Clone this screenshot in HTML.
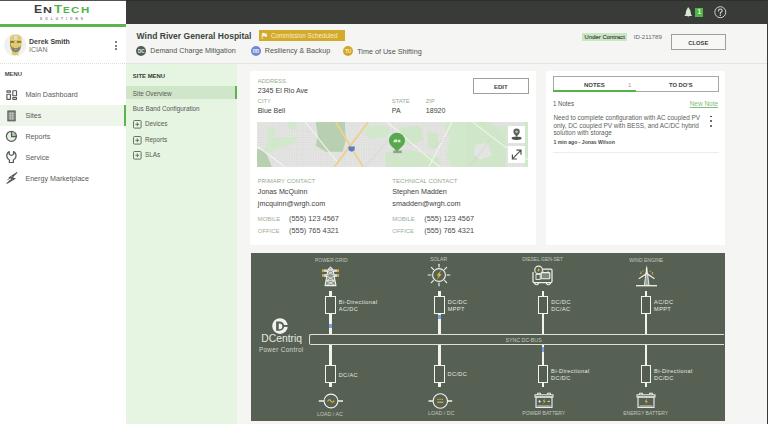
<!DOCTYPE html>
<html><head><meta charset="utf-8"><style>
html,body{margin:0;padding:0;width:768px;height:424px;overflow:hidden;background:#f5f5f3}
body{position:relative;font-family:"Liberation Sans", sans-serif}
.t{position:absolute;white-space:nowrap;line-height:12px;font-family:"Liberation Sans", sans-serif}
svg{overflow:visible}
</style></head><body>
<div style="position:absolute;left:0px;top:0px;width:768px;height:424px;background:#f5f5f3"></div>
<div style="position:absolute;left:0px;top:0px;width:126px;height:424px;background:#fff"></div>
<div style="position:absolute;left:126px;top:0px;width:642px;height:23.5px;background:#383b37"></div>
<div style="position:absolute;left:0px;top:0px;width:126px;height:1px;background:#50564f"></div>
<div style="position:absolute;left:126px;top:0px;width:642px;height:1px;background:#2c2e2c"></div>
<div style="position:absolute;left:0px;top:24px;width:126px;height:2.5px;background:#5bb54f"></div>
<div style="position:absolute;left:126px;top:23.5px;width:641px;height:40.8px;background:#f5f5f3;border-bottom:1px solid #e4e4e2;box-sizing:border-box"></div>
<div style="position:absolute;left:126px;top:63.5px;width:111px;height:361px;background:#e6f4e2"></div>
<div style="position:absolute;left:767px;top:0px;width:1px;height:424px;background:#3a3a3a"></div>
<div class="t" style="left:34.3px;top:2.85px;font-size:11.6px;color:#3d403c;font-weight:700;transform:scaleX(1.05);transform-origin:0 0">E</div>
<div class="t" style="left:43.3px;top:3.85px;font-size:9.2px;color:#3d403c;font-weight:700;transform:scaleX(1.35);transform-origin:0 0">N</div>
<div class="t" style="left:54.4px;top:2.85px;font-size:11.6px;color:#52b347;font-weight:700;transform:scaleX(1.15);transform-origin:0 0">T</div>
<div class="t" style="left:62.9px;top:3.85px;font-size:9.2px;color:#52b347;font-weight:700;transform:scaleX(1.1);transform-origin:0 0">E</div>
<div class="t" style="left:70.8px;top:3.85px;font-size:9.2px;color:#52b347;font-weight:700;transform:scaleX(1.25);transform-origin:0 0">C</div>
<div class="t" style="left:80.8px;top:3.85px;font-size:9.2px;color:#52b347;font-weight:700;transform:scaleX(1.25);transform-origin:0 0">H</div>
<div class="t" style="left:40px;top:12.9px;line-height:12px;font-size:3.1px;letter-spacing:3.1px;color:#777;font-weight:700">SOLUTIONS</div>
<svg style="position:absolute;left:2px;top:32px;" width="26" height="26" viewBox="0 0 26 26">
<defs><pattern id="av" width="1.6" height="1.6" patternUnits="userSpaceOnUse"><rect width="1.6" height="1.6" fill="#e2c14f"/><rect x="0.8" y="0.8" width="0.8" height="0.8" fill="#f1e3b0"/></pattern></defs>
<circle cx="13.2" cy="13.2" r="11" fill="#f0f0ee"/>
<path d="M8.2 5.5 Q8.5 2.8 13.5 2.6 Q19.2 2.8 19.6 6 L19.5 12.5 Q19.2 17 17 19.5 L15.8 22.8 L10.5 22.5 L10 19.5 Q8 17 7.9 12.5 Z" fill="url(#av)"/>
<path d="M8 6 Q8.2 10 8.6 12 L9.6 16 L8.4 14 Q7.8 10 8 6 Z" fill="#66707a"/>
<path d="M8.2 9.6 Q10.5 8.2 12.6 9.6 L12.2 10.8 Q10 10.2 8.3 11 Z M14.6 9.6 Q17 8.2 19.4 9.6 L19.3 10.8 Q17.4 10.2 15.2 10.8 Z" fill="#5b656c"/>
<path d="M9 13.6 Q10.2 16.2 11.2 15.2 Q13.5 17.4 16.2 15.2 Q17.6 16.2 18.8 13.6 Q18.6 18 16.3 19.6 Q13.6 21.2 11 19.6 Q9 18 9 13.6 Z" fill="#7c8378"/>
<path d="M11.6 16.8 Q13.6 18.4 15.6 16.8 Q13.6 19.6 11.6 16.8 Z" fill="#e2c14f"/>
<path d="M11.8 3.6 L15.4 3.6 L15 7.8 L12.2 7.8 Z" fill="#d9e0e2"/>
<path d="M10.4 20.2 L11 23 M14.4 21 L16.2 23.4 M12.4 21.4 L12.8 23.4" stroke="#e2c14f" stroke-width="1"/>
</svg>
<div class="t" style="left:29px;top:35.70px;font-size:7.0px;color:#3e413e;font-weight:700;">Derek Smith</div>
<div class="t" style="left:29px;top:44.00px;font-size:6.95px;color:#707370;">ICIAN</div>
<div style="position:absolute;left:114.5px;top:40.6px;width:2px;height:2px;background:#555;border-radius:50%"></div>
<div style="position:absolute;left:114.5px;top:44.5px;width:2px;height:2px;background:#555;border-radius:50%"></div>
<div style="position:absolute;left:114.5px;top:48.4px;width:2px;height:2px;background:#555;border-radius:50%"></div>
<div style="position:absolute;left:0px;top:63px;width:126px;height:1px;background-image:linear-gradient(90deg,#ddd 50%,transparent 50%);background-size:2px 1px"></div>
<div class="t" style="left:4.7px;top:68.30px;font-size:5.9px;color:#474a47;font-weight:700;">MENU</div>
<div style="position:absolute;left:0px;top:105.3px;width:126px;height:20.3px;background:#eef6ec"></div>
<div style="position:absolute;left:123.8px;top:105.3px;width:2.2px;height:20.3px;background:#5bb54f"></div>
<div class="t" style="left:25.4px;top:89.30px;font-size:7.15px;color:#585b58;">Main Dashboard</div>
<div class="t" style="left:25.4px;top:109.90px;font-size:7.15px;color:#585b58;">Sites</div>
<div class="t" style="left:25.4px;top:130.80px;font-size:7.15px;color:#585b58;">Reports</div>
<div class="t" style="left:25.4px;top:151.50px;font-size:7.15px;color:#585b58;">Service</div>
<div class="t" style="left:25.4px;top:172.60px;font-size:7.15px;color:#585b58;">Energy Marketplace</div>
<svg style="position:absolute;left:0px;top:0px;" width="20" height="110" viewBox="0 0 20 110">
<rect x="6.9" y="90.7" width="3.5" height="1.6" rx="0.3" fill="none" stroke="#555a55" stroke-width="1.15"/>
<rect x="6.9" y="94.2" width="3.5" height="5.2" rx="0.4" fill="none" stroke="#555a55" stroke-width="1.15"/>
<rect x="12.8" y="90.7" width="3.7" height="5.1" rx="0.4" fill="none" stroke="#555a55" stroke-width="1.15"/>
<rect x="12.8" y="97.5" width="3.7" height="1.9" rx="0.3" fill="none" stroke="#555a55" stroke-width="1.15"/>
</svg>
<svg style="position:absolute;left:7px;top:110px;" width="9" height="11.5" viewBox="0 0 9 11.5">
<rect x="0.9" y="1" width="7.2" height="9.8" fill="#858b85" stroke="#555a55" stroke-width="1.1"/>
<path d="M3.3 2 V10.2 M5.7 2 V10.2 M1.5 3.6 H7.5 M1.5 5.9 H7.5 M1.5 8.2 H7.5" stroke="#c9d0c9" stroke-width="0.7"/>
</svg>
<svg style="position:absolute;left:0px;top:120px;" width="24" height="24" viewBox="0 0 24 24">
<circle cx="11.4" cy="16.3" r="5" fill="#e3f3df" stroke="#555a55" stroke-width="1.25"/>
<path d="M11.6 11.3 V16.5 H16.4" fill="none" stroke="#555a55" stroke-width="1.3"/>
<path d="M12.6 11.8 A4.2 4.2 0 0 1 15.9 15.3 L12.6 15.3 Z" fill="#9ba09b"/>
<path d="M13.8 12.4 V15" stroke="#e9ece9" stroke-width="0.6"/>
</svg>
<svg style="position:absolute;left:0px;top:140px;" width="24" height="26" viewBox="0 0 24 26">
<path d="M9.3 11.6 A4.7 4.7 0 0 0 9.4 20 V22.5 H13.4 V20 A4.7 4.7 0 0 0 13.5 11.6 V14.4 Q11.4 16.2 9.3 14.4 Z" fill="#f4faf3" stroke="#555a55" stroke-width="1.2" stroke-linejoin="round"/>
</svg>
<svg style="position:absolute;left:6px;top:171.5px;" width="12" height="12" viewBox="0 0 12 12">
<path d="M10.8 0.6 L3.2 5.6 L7.2 5.8 L1 11.4 L9 6.6 L5.2 6.4 Z" fill="none" stroke="#555a55" stroke-width="1.1" stroke-linejoin="round"/>
<path d="M1.5 7.8 L4 6.2 M2.2 10 L3.6 9" stroke="#555a55" stroke-width="0.9"/>
</svg>
<svg style="position:absolute;left:683.5px;top:6.8px;" width="9" height="11" viewBox="0 0 9 11">
<path d="M4.3 0.5 C5 0.5 5.3 1.2 5.4 2 C6.4 2.8 6.6 4.2 6.8 6.2 C7 7.6 7.6 8.4 8.4 9.1 L0.2 9.1 C1 8.4 1.6 7.6 1.8 6.2 C2 4.2 2.2 2.8 3.2 2 C3.3 1.2 3.6 0.5 4.3 0.5 Z" fill="#d6ead3"/>
<path d="M3.3 9.4 Q4.3 11 5.3 9.4 Z" fill="#d6ead3"/>
</svg>
<div style="position:absolute;left:695px;top:8px;width:8.3px;height:8.6px;background:#4fb545"></div>
<div class="t" style="left:697.6px;top:6.30px;font-size:6.5px;color:#e8f5e6;font-weight:700;">1</div>
<svg style="position:absolute;left:713.5px;top:5.8px;" width="13" height="13" viewBox="0 0 13 13">
<circle cx="6.3" cy="6.2" r="5.5" fill="none" stroke="#cdd1cd" stroke-width="1"/>
<path d="M4.5 4.9 Q4.5 3 6.3 3 Q8.1 3 8.1 4.7 Q8.1 5.8 6.9 6.3 Q6.3 6.6 6.3 7.6" fill="none" stroke="#d8dcd8" stroke-width="1.1" stroke-linecap="round"/>
<circle cx="6.3" cy="9.2" r="0.7" fill="#d8dcd8"/>
</svg>
<div class="t" style="left:136.6px;top:29.90px;font-size:8.56px;color:#3c463c;font-weight:700;">Wind River General Hospital</div>
<div style="position:absolute;left:258.75px;top:30.0px;width:86px;height:10.7px;background:#d4aa2a"></div>
<svg style="position:absolute;left:260.6px;top:32px;" width="7" height="7.5" viewBox="0 0 7 7.5"><path d="M1.2 1 V7" stroke="#fbf6e6" stroke-width="0.8"/><path d="M1.4 1.2 Q3 0.4 4.2 1.4 Q5.2 2 6.4 1.2 L5.6 2.8 L6.4 4.4 Q5.2 5.2 4.2 4.6 Q3 3.8 1.4 4.6 Z" fill="#fbf6e6"/></svg>
<div class="t" style="left:271px;top:29.60px;font-size:6.34px;color:#f8eccb;">Commission Scheduled</div>
<div style="position:absolute;left:136.0px;top:45.599999999999994px;width:10.4px;height:10.4px;background:#555e55;border-radius:50%"></div>
<div class="t" style="left:138.1px;top:45.50px;font-size:4.6px;color:#e8ece8;font-weight:700;letter-spacing:-0.15px">DC</div>
<div class="t" style="left:150.2px;top:45.30px;font-size:7.2px;color:#505650;">Demand Charge Mitigation</div>
<div style="position:absolute;left:250.60000000000002px;top:45.599999999999994px;width:10.4px;height:10.4px;background:#7088d4;border-radius:50%"></div>
<div class="t" style="left:252.70000000000002px;top:45.50px;font-size:4.6px;color:#e8ecf8;font-weight:700;letter-spacing:-0.15px">RB</div>
<div class="t" style="left:264.7px;top:45.30px;font-size:7.2px;color:#505650;">Resiliency &amp; Backup</div>
<div style="position:absolute;left:343.1px;top:45.8px;width:10.4px;height:10.4px;background:#d4a72c;border-radius:50%"></div>
<div class="t" style="left:345.2px;top:45.70px;font-size:4.6px;color:#fbf0c8;font-weight:700;letter-spacing:-0.15px">TU</div>
<div class="t" style="left:357.2px;top:45.50px;font-size:7.2px;color:#505650;">Time of Use Shifting</div>
<div style="position:absolute;left:582.2px;top:33.2px;width:44.7px;height:7.8px;background:#cbe6c4"></div>
<div class="t" style="left:584.6px;top:31.10px;font-size:5.95px;color:#3f4a3e;font-weight:400;-webkit-text-stroke:0.15px #3f4a3e">Under Contract</div>
<div class="t" style="left:633.7px;top:30.65px;font-size:6.14px;color:#666966;">ID-211789</div>
<div style="position:absolute;left:670.7px;top:34.3px;width:55px;height:15.7px;border:1px solid #9c9f9c;box-sizing:border-box;background:#f7f7f5"></div>
<div class="t" style="left:688.3px;top:36.50px;font-size:5.8px;color:#3f423e;font-weight:700;">CLOSE</div>
<div class="t" style="left:132.8px;top:69.50px;font-size:5.95px;color:#3a3d3a;font-weight:700;">SITE MENU</div>
<div style="position:absolute;left:126px;top:86px;width:111px;height:13.4px;background:#cfe6c8"></div>
<div style="position:absolute;left:234.6px;top:86px;width:2.4px;height:13.4px;background:#5bb54f"></div>
<div class="t" style="left:132.8px;top:88.00px;font-size:6.3px;color:#555855;">Site Overview</div>
<div class="t" style="left:132.8px;top:102.90px;font-size:6.33px;color:#555855;">Bus Band Configuration</div>
<svg style="position:absolute;left:132.8px;top:120.0px;" width="9" height="9" viewBox="0 0 9 9"><rect x="0.5" y="0.5" width="7.6" height="7.6" rx="0.9" fill="none" stroke="#5f625f" stroke-width="0.9"/><path d="M4.3 2.4 V6.2 M2.4 4.3 H6.2" stroke="#5f625f" stroke-width="0.9"/></svg>
<div class="t" style="left:145px;top:118.10px;font-size:6.3px;color:#555855;">Devices</div>
<svg style="position:absolute;left:132.8px;top:135.5px;" width="9" height="9" viewBox="0 0 9 9"><rect x="0.5" y="0.5" width="7.6" height="7.6" rx="0.9" fill="none" stroke="#5f625f" stroke-width="0.9"/><path d="M4.3 2.4 V6.2 M2.4 4.3 H6.2" stroke="#5f625f" stroke-width="0.9"/></svg>
<div class="t" style="left:145px;top:133.60px;font-size:6.3px;color:#555855;">Reports</div>
<svg style="position:absolute;left:132.8px;top:151.1px;" width="9" height="9" viewBox="0 0 9 9"><rect x="0.5" y="0.5" width="7.6" height="7.6" rx="0.9" fill="none" stroke="#5f625f" stroke-width="0.9"/><path d="M4.3 2.4 V6.2 M2.4 4.3 H6.2" stroke="#5f625f" stroke-width="0.9"/></svg>
<div class="t" style="left:145px;top:149.20px;font-size:6.3px;color:#555855;">SLAs</div>
<div style="position:absolute;left:250.3px;top:70.6px;width:285.4px;height:174.4px;background:#fff"></div>
<div class="t" style="left:257.7px;top:75.10px;font-size:5.82px;color:#92ae8d;">ADDRESS</div>
<div class="t" style="left:257.7px;top:84.50px;font-size:7.1px;color:#3e433e;">2345 El Rio Ave</div>
<div class="t" style="left:257.7px;top:95.30px;font-size:5.82px;color:#92ae8d;">CITY</div>
<div class="t" style="left:257.7px;top:105.40px;font-size:6.97px;color:#3e433e;">Blue Bell</div>
<div class="t" style="left:391.8px;top:95.30px;font-size:5.82px;color:#92ae8d;">STATE</div>
<div class="t" style="left:391.8px;top:105.40px;font-size:6.97px;color:#3e433e;">PA</div>
<div class="t" style="left:425.8px;top:95.30px;font-size:5.82px;color:#92ae8d;">ZIP</div>
<div class="t" style="left:425.8px;top:105.40px;font-size:7.08px;color:#3e433e;">18920</div>
<div style="position:absolute;left:473.4px;top:78.3px;width:55.3px;height:15.3px;border:1px solid #9c9f9c;box-sizing:border-box;background:#fff"></div>
<div class="t" style="left:493.9px;top:81.00px;font-size:6.1px;color:#3e433e;font-weight:700;">EDIT</div>
<svg style="position:absolute;left:257.2px;top:122.2px;" width="271.1" height="44.9" viewBox="0 0 271.1 44.9">
<defs>
<pattern id="dd" width="1.8" height="1.8" patternUnits="userSpaceOnUse"><rect width="1.8" height="1.8" fill="#c9e1c1"/><rect x="0.5" y="0.5" width="0.8" height="0.8" fill="#758572"/></pattern>
<pattern id="wd" width="1.8" height="1.8" patternUnits="userSpaceOnUse"><rect width="1.8" height="1.8" fill="#c8e2bf"/><rect x="0.5" y="0.5" width="0.8" height="0.8" fill="#f2f7f0"/></pattern>
<pattern id="gt" width="2.4" height="2.4" patternUnits="userSpaceOnUse"><rect width="2.4" height="2.4" fill="#e4e4e2"/><rect x="1" y="1" width="0.7" height="0.7" fill="#cacac8"/></pattern>
<clipPath id="mc"><rect width="271.1" height="44.9"/></clipPath>
</defs>
<g clip-path="url(#mc)">
<rect width="271.1" height="44.9" fill="url(#gt)"/>
<path d="M10.8 4.8 L17.8 4.8 L17.8 15.8 L40.8 14.8 L38.8 20.8 L27.8 24.8 L17.8 26.8 L14.8 30.8 L4.8 30.8 L8.8 23.8 L10.8 17.8 Z" fill="#d2e8ca"/><path d="M30.8 0.0 L40.8 0.0 L38.8 7.8 L31.8 6.8 Z" fill="#d2e8ca"/><path d="M107.8 4.8 L122.8 2.8 L133.8 5.8 L130.8 13.8 L114.8 17.3 L107.8 13.8 Z" fill="#d2e8ca"/><path d="M186.8 2.8 L194.8 0.0 L208.8 0.0 L208.8 44.9 L194.8 44.9 L188.8 32.8 L192.8 17.8 Z" fill="#d2e8ca"/><path d="M234.8 5.8 L249.8 2.8 L249.8 27.8 L238.8 23.8 Z" fill="#d2e8ca"/><path d="M266.8 0.0 L271.1 0.0 L271.1 44.9 L266.8 44.9 Z" fill="#d2e8ca"/><path d="M58.8 0.0 L87.8 0.0 L88.8 17.8 L85.8 29.8 L68.8 29.8 L58.8 23.8 L60.8 12.8 Z" fill="url(#dd)"/><path d="M0.0 26.8 L8.8 29.8 L14.8 44.9 L0.0 44.9 Z" fill="url(#dd)"/><path d="M128.8 30.3 L152.8 27.8 L172.8 32.8 L174.8 44.9 L128.8 44.9 Z" fill="url(#wd)"/><path d="M208.8 0.0 L232.8 0.0 L247.8 12.8 L248.8 44.9 L208.8 44.9 Z" fill="url(#wd)"/><path d="M170.5 9.8 L181.5 11.8 L180.8 26.5 L170.8 24.8 Z" fill="url(#wd)"/><path d="M167.8 33.8 L182.8 35.8 L182.8 44.9 L167.8 44.9 Z" fill="url(#wd)"/><path d="M142.8 5.8 L162.8 3.8 L166.8 17.8 L152.8 23.8 L142.8 17.8 Z" fill="url(#wd)"/><path d="M218.8 22.8 L230.8 20.8 L234.8 33.8 L222.8 37.8 L216.8 31.8 Z" fill="#e4e4e2"/>
<path d="M0.0 24.3 L28.3 44.9 M48.3 0.0 L81.4 41.4 M130.1 0.0 L172.8 36.8 M172.8 36.8 L182.8 44.9 M171.8 44.9 L195.1 0.0 M215.7 0.0 L248.5 25.1 M248.5 25.1 L271.1 37.8" stroke="#f3f3f1" stroke-width="1.1" fill="none"/>
<path d="M107.8 44.9 L131.4 17.8 M174.6 27.8 L187.8 15.8 M212.8 44.9 L232.8 17.8" stroke="#cfcfcd" stroke-width="0.6" fill="none"/>
<path d="M78.7 0.0 L106.0 44.9 M111.2 0.0 L77.4 44.9" stroke="#ecd18f" stroke-width="1.9" fill="none"/>
<path d="M91.2 24.6 L98.0 24.6 L97.4 28.4 L94.6 29.7 L91.8 28.4 Z" fill="#5d79c9"/>
</g>
</svg>
<svg style="position:absolute;left:388px;top:131.5px;" width="18" height="24" viewBox="0 0 18 24">
<rect x="5.2" y="18.5" width="8.6" height="2.6" fill="#8a8d8a" opacity="0.8"/>
<path d="M9 20 C7.4 16.5 1 14 1 8.7 A8 8 0 0 1 17 8.7 C17 14 10.6 16.5 9 20 Z" fill="#57aa4b"/>
<path d="M5.2 10.2 L6.2 7.6 L9 7.6 L9 10.2 Z M9.6 7.8 H12.4 V10.2 H9.6 Z" fill="#d8ecd5"/>
</svg>
<div style="position:absolute;left:507.7px;top:126px;width:17.3px;height:16.9px;background:#fff"></div>
<div style="position:absolute;left:507.7px;top:146.3px;width:17.3px;height:17.1px;background:#fff"></div>
<svg style="position:absolute;left:507.7px;top:126px;" width="17.3" height="16.9" viewBox="0 0 17.3 16.9">
<path d="M8.6 10.8 C7.4 9.2 5.4 8 5.4 5.8 A3.2 3.2 0 0 1 11.8 5.8 C11.8 8 9.8 9.2 8.6 10.8 Z" fill="#5a605a"/>
<circle cx="8.6" cy="5.8" r="1.3" fill="#b8beb8"/>
<ellipse cx="8.6" cy="12.3" rx="5" ry="1.7" fill="#4d524d"/>
</svg>
<svg style="position:absolute;left:507.7px;top:146.3px;" width="17.3" height="17.1" viewBox="0 0 17.3 17.1">
<path d="M4.6 12.6 L12.8 4.4 M8.4 4.2 H13 V8.8 M4.4 8.4 V13 H9" stroke="#4d524d" stroke-width="1.2" fill="none"/>
</svg>
<div class="t" style="left:257.8px;top:175.40px;font-size:6.03px;color:#92ae8d;">PRIMARY CONTACT</div>
<div class="t" style="left:257.8px;top:185.50px;font-size:7.17px;color:#3e433e;">Jonas McQuinn</div>
<div class="t" style="left:257.8px;top:197.70px;font-size:7.21px;color:#3e433e;">jmcquinn@wrgh.com</div>
<div class="t" style="left:257.8px;top:213.30px;font-size:5.95px;color:#9ab096;">MOBILE</div>
<div class="t" style="left:289px;top:213.10px;font-size:7.36px;color:#4a4d4a;">(555) 123 4567</div>
<div class="t" style="left:257.8px;top:225.00px;font-size:5.95px;color:#9ab096;">OFFICE</div>
<div class="t" style="left:289px;top:224.80px;font-size:7.36px;color:#4a4d4a;">(555) 765 4321</div>
<div class="t" style="left:392.3px;top:175.40px;font-size:6.11px;color:#92ae8d;">TECHNICAL CONTACT</div>
<div class="t" style="left:392.3px;top:185.50px;font-size:7.17px;color:#3e433e;">Stephen Madden</div>
<div class="t" style="left:392.3px;top:197.70px;font-size:7.21px;color:#3e433e;">smadden@wrgh.com</div>
<div class="t" style="left:392.3px;top:213.30px;font-size:5.95px;color:#9ab096;">MOBILE</div>
<div class="t" style="left:424.2px;top:213.10px;font-size:7.36px;color:#4a4d4a;">(555) 123 4567</div>
<div class="t" style="left:392.3px;top:225.00px;font-size:5.95px;color:#9ab096;">OFFICE</div>
<div class="t" style="left:424.2px;top:224.80px;font-size:7.36px;color:#4a4d4a;">(555) 765 4321</div>
<div style="position:absolute;left:545.5px;top:70.6px;width:179.6px;height:174.4px;background:#fff"></div>
<div style="position:absolute;left:552.9px;top:76.3px;width:165.7px;height:15.9px;border:1px solid #a5a8a5;box-sizing:border-box"></div>
<div style="position:absolute;left:553.4px;top:90px;width:82.6px;height:2px;background:#52b347"></div>
<div class="t" style="left:584px;top:78.75px;font-size:6.04px;color:#3e433e;font-weight:700;">NOTES</div>
<div class="t" style="left:628px;top:78.75px;font-size:6.0px;color:#999;">1</div>
<div class="t" style="left:669px;top:78.75px;font-size:5.82px;color:#3e433e;font-weight:700;">TO DO'S</div>
<div class="t" style="left:552.9px;top:97.50px;font-size:7.0px;color:#525552;transform:scaleX(0.87);transform-origin:0 0">1 Notes</div>
<div class="t" style="left:689.7px;top:97.60px;font-size:6.47px;color:#85bd7e;text-decoration:underline">New Note</div>
<div class="t" style="left:553.4px;top:112.20px;font-size:6.42px;color:#5c5f5c;">Need to complete configuration with AC coupled PV</div>
<div class="t" style="left:553.4px;top:119.80px;font-size:6.42px;color:#5c5f5c;">only, DC coupled PV with BESS, and AC/DC hybrid</div>
<div class="t" style="left:553.4px;top:127.10px;font-size:6.42px;color:#5c5f5c;">solution with storage</div>
<div class="t" style="left:553.4px;top:136.20px;font-size:5.13px;color:#4a4d4a;font-weight:700;">1 min ago - Jonas Wilson</div>
<div style="position:absolute;left:710.3px;top:115.69999999999999px;width:1.8px;height:1.8px;background:#444;border-radius:50%"></div>
<div style="position:absolute;left:710.3px;top:120.3px;width:1.8px;height:1.8px;background:#444;border-radius:50%"></div>
<div style="position:absolute;left:710.3px;top:124.89999999999999px;width:1.8px;height:1.8px;background:#444;border-radius:50%"></div>
<div style="position:absolute;left:553px;top:152px;width:165.5px;height:1px;background:#ececea"></div>
<div style="position:absolute;left:250.5px;top:252.7px;width:474.0px;height:168.7px;background:#566153"></div>
<div style="position:absolute;left:308.8px;top:333.7px;width:415.7px;height:11.1px;border:1.3px solid #dfe0da;border-right:none;border-radius:2.2px 0 0 2.2px;box-sizing:border-box;background:#535e50"></div>
<div class="t" style="left:505.4px;top:333.80px;font-size:5.28px;color:#c4c9c1;">SYNC DC-BUS</div>
<div style="position:absolute;left:329.45000000000005px;top:290.5px;width:2.3px;height:43.30000000000001px;background:#f2f2ee"></div>
<div style="position:absolute;left:329.45000000000005px;top:345px;width:2.3px;height:42.30000000000001px;background:#f2f2ee"></div>
<div style="position:absolute;left:325.40000000000003px;top:296.2px;width:10.4px;height:17.6px;border:1.2px solid #f2f2ee;box-sizing:border-box;background:#535e50"></div>
<div style="position:absolute;left:325.40000000000003px;top:365.2px;width:10.4px;height:17.5px;border:1.2px solid #f2f2ee;box-sizing:border-box;background:#535e50"></div>
<div style="position:absolute;left:438.45000000000005px;top:290.5px;width:2.3px;height:43.30000000000001px;background:#f2f2ee"></div>
<div style="position:absolute;left:438.45000000000005px;top:345px;width:2.3px;height:42.30000000000001px;background:#f2f2ee"></div>
<div style="position:absolute;left:434.40000000000003px;top:296.2px;width:10.4px;height:17.6px;border:1.2px solid #f2f2ee;box-sizing:border-box;background:#535e50"></div>
<div style="position:absolute;left:434.40000000000003px;top:365.2px;width:10.4px;height:17.5px;border:1.2px solid #f2f2ee;box-sizing:border-box;background:#535e50"></div>
<div style="position:absolute;left:541.5500000000001px;top:290.5px;width:2.3px;height:43.30000000000001px;background:#f2f2ee"></div>
<div style="position:absolute;left:541.5500000000001px;top:345px;width:2.3px;height:42.30000000000001px;background:#f2f2ee"></div>
<div style="position:absolute;left:537.5px;top:296.2px;width:10.4px;height:17.6px;border:1.2px solid #f2f2ee;box-sizing:border-box;background:#535e50"></div>
<div style="position:absolute;left:537.5px;top:365.2px;width:10.4px;height:17.5px;border:1.2px solid #f2f2ee;box-sizing:border-box;background:#535e50"></div>
<div style="position:absolute;left:644.65px;top:290.5px;width:2.3px;height:43.30000000000001px;background:#f2f2ee"></div>
<div style="position:absolute;left:644.65px;top:345px;width:2.3px;height:42.30000000000001px;background:#f2f2ee"></div>
<div style="position:absolute;left:640.5999999999999px;top:296.2px;width:10.4px;height:17.6px;border:1.2px solid #f2f2ee;box-sizing:border-box;background:#535e50"></div>
<div style="position:absolute;left:640.5999999999999px;top:365.2px;width:10.4px;height:17.5px;border:1.2px solid #f2f2ee;box-sizing:border-box;background:#535e50"></div>
<div style="position:absolute;left:329.45000000000005px;top:323.6px;width:2.3px;height:4.6px;background:#7d9ee6"></div>
<div style="position:absolute;left:438.45000000000005px;top:315.0px;width:2.3px;height:3.9px;background:#7d9ee6"></div>
<div style="position:absolute;left:541.5500000000001px;top:346.6px;width:2.3px;height:5.3px;background:#7d9ee6"></div>
<div class="t" style="left:315.0px;top:255.20px;font-size:4.96px;color:#c2c7bf;">POWER GRID</div>
<div class="t" style="left:430.2px;top:254.40px;font-size:4.96px;color:#c2c7bf;">SOLAR</div>
<div class="t" style="left:522.3px;top:253.80px;font-size:4.96px;color:#c2c7bf;">DIESEL GEN-SET</div>
<div class="t" style="left:629.2px;top:254.10px;font-size:5.02px;color:#c2c7bf;">WIND ENGINE</div>
<div class="t" style="left:338.8px;top:295.50px;font-size:5.6px;color:#e4e7e0;letter-spacing:0.38px">Bi-Directional</div>
<div class="t" style="left:338.8px;top:303.00px;font-size:5.6px;color:#e4e7e0;letter-spacing:0.38px">AC/DC</div>
<div class="t" style="left:447.8px;top:295.50px;font-size:5.6px;color:#e4e7e0;letter-spacing:0.38px">DC/DC</div>
<div class="t" style="left:447.8px;top:302.80px;font-size:5.6px;color:#e4e7e0;letter-spacing:0.38px">MPPT</div>
<div class="t" style="left:551.2px;top:295.50px;font-size:5.6px;color:#e4e7e0;letter-spacing:0.38px">DC/DC</div>
<div class="t" style="left:551.2px;top:302.80px;font-size:5.6px;color:#e4e7e0;letter-spacing:0.38px">DC/AC</div>
<div class="t" style="left:654.1px;top:295.50px;font-size:5.6px;color:#e4e7e0;letter-spacing:0.38px">AC/DC</div>
<div class="t" style="left:654.1px;top:302.80px;font-size:5.6px;color:#e4e7e0;letter-spacing:0.38px">MPPT</div>
<div class="t" style="left:338.7px;top:368.50px;font-size:5.6px;color:#e4e7e0;letter-spacing:0.38px">DC/AC</div>
<div class="t" style="left:447.6px;top:368.20px;font-size:5.6px;color:#e4e7e0;letter-spacing:0.38px">DC/DC</div>
<div class="t" style="left:551.1px;top:364.60px;font-size:5.6px;color:#e4e7e0;letter-spacing:0.38px">Bi-Directional</div>
<div class="t" style="left:551.1px;top:372.00px;font-size:5.6px;color:#e4e7e0;letter-spacing:0.38px">DC/DC</div>
<div class="t" style="left:654.1px;top:364.60px;font-size:5.6px;color:#e4e7e0;letter-spacing:0.38px">Bi-Directional</div>
<div class="t" style="left:654.1px;top:372.00px;font-size:5.6px;color:#e4e7e0;letter-spacing:0.38px">DC/DC</div>
<div class="t" style="left:317.0px;top:407.90px;font-size:5.28px;color:#c2c7bf;">LOAD / AC</div>
<div class="t" style="left:428.0px;top:407.30px;font-size:5.28px;color:#c2c7bf;">LOAD / DC</div>
<div class="t" style="left:522.3px;top:407.10px;font-size:5.01px;color:#c2c7bf;">POWER BATTERY</div>
<div class="t" style="left:623.2px;top:407.10px;font-size:5.0px;color:#c2c7bf;">ENERGY BATTERY</div>
<svg style="position:absolute;left:270px;top:316.4px;" width="20" height="20" viewBox="0 0 20 20">
<circle cx="10" cy="10.1" r="7.8" fill="#f2f2ee"/>
<path d="M6.1 5.5 H9.6 A4.6 4.6 0 0 1 9.6 14.7 H6.1 Z" fill="#566153"/>
<path d="M8.7 7.4 H9.4 A2.95 2.95 0 0 1 9.4 13.3 H8.7 Z" fill="#f2f2ee"/>
<rect x="13" y="9.0" width="6" height="1.9" fill="#566153"/>
</svg>
<div class="t" style="left:261.3px;top:333.00px;font-size:10.34px;color:#e4e7e0;">DCentriq</div>
<div class="t" style="left:258.9px;top:343.90px;font-size:6.4px;color:#d0d4cc;letter-spacing:0.32px">Power Control</div>
<svg style="position:absolute;left:320px;top:265px;" width="21" height="22" viewBox="0 0 21 22">
<path d="M10.5 2 L8 5 L4.2 5 L4.2 6.3 L7.7 6.3 L7 9.8 L4.2 9.8 L4.2 11.1 L6.8 11.1 L5 20.6 L16 20.6 L14.2 11.1 L16.8 11.1 L16.8 9.8 L14 9.8 L13.3 6.3 L16.8 6.3 L16.8 5 L13 5 Z" fill="#8e978b" stroke="#f2f2ee" stroke-width="1.05" stroke-linejoin="round"/>
<path d="M8.2 3.6 L12.8 6.3 M12.8 3.6 L8.2 6.3 M7.8 6.3 L13.2 9.8 M13.2 6.3 L7.8 9.8 M7 11.1 L14 15.6 M14 11.1 L6.6 15.6 M6.3 15.6 L14.8 20.6 M14.8 15.6 L6.2 20.6 M6.6 15.6 H14.4" stroke="#f2f2ee" stroke-width="0.75"/>
<path d="M2.4 4.4 L4.4 5.6 L2.4 6.9 Z M18.6 4.4 L16.6 5.6 L18.6 6.9 Z M2.4 9.2 L4.4 10.4 L2.4 11.7 Z M18.6 9.2 L16.6 10.4 L18.6 11.7 Z" fill="#e6bd3a" stroke="#e6bd3a" stroke-width="0.6"/>
</svg>
<svg style="position:absolute;left:427.5px;top:264.3px;" width="22" height="22" viewBox="0 0 22 22">
<circle cx="11" cy="11" r="6.4" fill="none" stroke="#f2f2ee" stroke-width="1.1"/>
<path d="M11.00 3.00 L11.00 0.20" stroke="#f2f2ee" stroke-width="1.15" stroke-linecap="round"/><path d="M16.66 5.34 L18.64 3.36" stroke="#f2f2ee" stroke-width="1.15" stroke-linecap="round"/><path d="M19.00 11.00 L21.80 11.00" stroke="#f2f2ee" stroke-width="1.15" stroke-linecap="round"/><path d="M16.66 16.66 L18.64 18.64" stroke="#f2f2ee" stroke-width="1.15" stroke-linecap="round"/><path d="M11.00 19.00 L11.00 21.80" stroke="#f2f2ee" stroke-width="1.15" stroke-linecap="round"/><path d="M5.34 16.66 L3.36 18.64" stroke="#f2f2ee" stroke-width="1.15" stroke-linecap="round"/><path d="M3.00 11.00 L0.20 11.00" stroke="#f2f2ee" stroke-width="1.15" stroke-linecap="round"/><path d="M5.34 5.34 L3.36 3.36" stroke="#f2f2ee" stroke-width="1.15" stroke-linecap="round"/>
<path d="M13.6 5.8 L8.6 11.4 L10.8 11.6 L8.4 16 L13.6 10.2 L11.4 10 Z" fill="#e6bd3a"/>
</svg>
<svg style="position:absolute;left:531px;top:265px;" width="23" height="21" viewBox="0 0 23 21">
<path d="M4 4.2 H20 Q21 4.2 21 5.2 V16.6 Q21 17.6 20 17.6 H3 Q2 17.6 2 16.6 V7" fill="none" stroke="#f2f2ee" stroke-width="1.2"/>
<rect x="10.2" y="7.6" width="8.6" height="6.2" rx="0.8" fill="#7f887c" stroke="#f2f2ee" stroke-width="1.1"/>
<rect x="5" y="9.4" width="4.2" height="5" fill="none" stroke="#f2f2ee" stroke-width="0.9"/>
<path d="M12 7.6 V5.6 M17 7.6 V5.6" stroke="#f2f2ee" stroke-width="0.7"/>
<circle cx="7.6" cy="4.9" r="3.8" fill="#566153" stroke="#f2f2ee" stroke-width="1.1"/>
<path d="M8.4 2.2 L6.2 5.4 L7.6 5.4 L6.6 7.8 L9.2 4.4 L7.8 4.4 Z" fill="#e6bd3a"/>
<path d="M3.6 17.6 Q3.6 19.8 5.6 19.8 Q7.6 19.8 7.6 17.6 M15.4 17.6 Q15.4 19.8 17.4 19.8 Q19.4 19.8 19.4 17.6" fill="none" stroke="#f2f2ee" stroke-width="1.1"/>
</svg>
<svg style="position:absolute;left:634.5px;top:263.5px;" width="23" height="23" viewBox="0 0 23 23">
<path d="M11.7 1.2 Q12.9 5 12.7 8.6 L10.7 8.6 Q10.5 5 11.7 1.2 Z" fill="#f2f2ee"/>
<path d="M10.9 9.2 L3.6 14.2 Q3.4 15.2 4.4 15.1 L11.6 10.6 Z M12.5 9.2 L19.8 14.2 Q20 15.2 19 15.1 L11.8 10.6 Z" fill="#f2f2ee"/>
<circle cx="11.7" cy="9.4" r="1.4" fill="#f2f2ee"/>
<path d="M10.8 10.4 L9.4 21.3 L14 21.3 L12.6 10.4" fill="#9aa297" stroke="#f2f2ee" stroke-width="0.9"/>
<path d="M1 21.7 H22" stroke="#f2f2ee" stroke-width="1.3"/>
<path d="M5.6 10.2 Q7 8.6 5.4 7.6 M7.6 7.6 L8.4 6.6 M17.8 8 Q16.4 9.6 18 10.6 M15.8 6.8 L15 7.8" stroke="#e6bd3a" stroke-width="1" fill="none"/>
</svg>
<svg style="position:absolute;left:316.5px;top:391.5px;" width="27" height="18" viewBox="0 0 27 18">
<circle cx="14" cy="9" r="6.9" fill="none" stroke="#f2f2ee" stroke-width="1.1"/>
<path d="M1.8 9 H7.1 M20.9 9 H26" stroke="#f2f2ee" stroke-width="1.3"/>
<path d="M10.6 9.4 Q12.2 6.4 13.8 9 Q15.4 11.6 17.2 8.6" fill="none" stroke="#e6bd3a" stroke-width="1.1"/>
</svg>
<svg style="position:absolute;left:426.5px;top:391.5px;" width="27" height="18" viewBox="0 0 27 18">
<circle cx="13.3" cy="9" r="7.2" fill="none" stroke="#f2f2ee" stroke-width="1.1"/>
<path d="M1.5 9 H6.1 M20.5 9 H25.2" stroke="#f2f2ee" stroke-width="1.3"/>
<path d="M10.2 7.3 H16.4" stroke="#e6bd3a" stroke-width="1" stroke-dasharray="1.4 0.8"/>
<path d="M10.2 10.2 H16.4" stroke="#e6bd3a" stroke-width="1.1"/>
</svg>
<svg style="position:absolute;left:533.7px;top:391.8px;" width="20" height="17" viewBox="0 0 20 17">
<path d="M3.5 2.6 V1.2 H6.5 V2.6 M13.5 2.6 V1.2 H16.5 V2.6" fill="none" stroke="#f2f2ee" stroke-width="1"/>
<rect x="1" y="2.8" width="18" height="2.2" fill="none" stroke="#f2f2ee" stroke-width="1"/>
<rect x="2" y="5" width="16" height="10.4" fill="none" stroke="#f2f2ee" stroke-width="1.1"/>
<path d="M3.5 14 H16.5" stroke="#f2f2ee" stroke-width="0.8"/>
<path d="M4.4 9.4 H6.8 M5.6 8.2 V10.6 M13.6 9.4 H15.8" stroke="#f2f2ee" stroke-width="0.9"/><path d="M10.6 6.2 L8.8 9.6 L10.2 9.6 L9.2 12.6 L11.6 8.8 L10.2 8.8 Z" fill="#e6bd3a"/>
</svg>
<svg style="position:absolute;left:635.5px;top:391.8px;" width="20" height="17" viewBox="0 0 20 17">
<path d="M3.5 2.6 V1.2 H6.5 V2.6 M13.5 2.6 V1.2 H16.5 V2.6" fill="none" stroke="#f2f2ee" stroke-width="1"/>
<rect x="1" y="2.8" width="18" height="2.2" fill="none" stroke="#f2f2ee" stroke-width="1"/>
<rect x="2" y="5" width="16" height="10.4" fill="none" stroke="#f2f2ee" stroke-width="1.1"/>
<path d="M3.5 14 H16.5" stroke="#f2f2ee" stroke-width="0.8"/>
<path d="M10.8 6.2 L8.8 9.8 L10.4 9.8 L9.4 12.8 L11.8 9 L10.4 9 Z" fill="#e6bd3a"/>
</svg>
</body></html>
